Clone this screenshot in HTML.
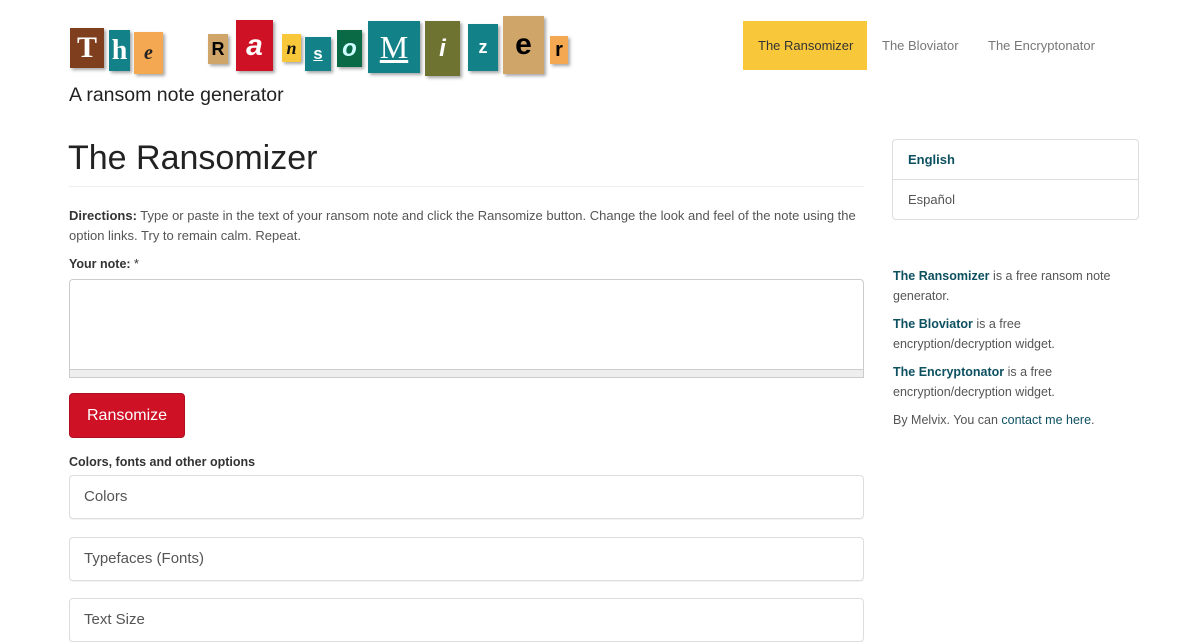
<!DOCTYPE html>
<html><head><meta charset="utf-8"><style>
*{box-sizing:border-box;margin:0;padding:0}
body{width:1200px;height:630px;overflow:hidden;background:#fff;font-family:"Liberation Sans",Arial,sans-serif;color:#333;position:relative}
.a{position:absolute}
.t{position:absolute;display:flex;align-items:center;justify-content:center;box-shadow:2px 2px 3px rgba(0,0,0,.35);font-weight:bold}
.nav{position:absolute;top:21px;height:49px;line-height:49px;font-size:13px;color:#777;white-space:nowrap}
.panel{position:absolute;left:69px;width:795px;border:1px solid #ddd;border-radius:4px;font-size:15px;color:#555;padding-left:14px;box-shadow:0 1px 1px rgba(0,0,0,.05)}
.teal{color:#0d5060;font-weight:bold}
.side p{margin-bottom:9px}
</style></head><body>
<div class="t" style="left:70px;top:28px;width:34px;height:40px;background:#7f3f1e;color:#fff;font-family:'Liberation Serif';font-size:30px">T</div>
<div class="t" style="left:109px;top:30px;width:21px;height:41px;background:#138188;color:#fff;font-family:'Liberation Serif';font-size:28px">h</div>
<div class="t" style="left:134px;top:32px;width:29px;height:42px;background:#f5a852;color:#222;font-family:'Liberation Serif';font-style:italic;font-size:20px">e</div>
<div class="t" style="left:208px;top:34px;width:20px;height:30px;background:#d0a56a;color:#000;font-size:18px">R</div>
<div class="t" style="left:236px;top:20px;width:37px;height:51px;background:#cf1125;color:#fff;font-style:italic;font-size:30px">a</div>
<div class="t" style="left:282px;top:34px;width:19px;height:28px;background:#f8c83a;color:#111;font-family:'Liberation Serif';font-style:italic;font-size:18px">n</div>
<div class="t" style="left:305px;top:37px;width:26px;height:34px;background:#138188;color:#fff;font-size:17px;text-decoration:underline">s</div>
<div class="t" style="left:337px;top:30px;width:25px;height:37px;background:#0a6a46;color:#cff;font-style:italic;font-size:24px">o</div>
<div class="t" style="left:368px;top:21px;width:52px;height:52px;background:#138188;color:#fff;font-family:'Liberation Serif';font-weight:normal;font-size:32px;text-decoration:underline">M</div>
<div class="t" style="left:425px;top:21px;width:35px;height:55px;background:#6f7331;color:#fff;font-style:italic;font-size:24px">i</div>
<div class="t" style="left:468px;top:24px;width:30px;height:47px;background:#138188;color:#fff;font-size:18px">z</div>
<div class="t" style="left:503px;top:16px;width:41px;height:58px;background:#d0a56a;color:#000;font-size:30px">e</div>
<div class="t" style="left:550px;top:36px;width:18px;height:28px;background:#f5a852;color:#000;font-size:20px">r</div>
<div class="a" style="left:69px;top:84px;font-size:19.5px;color:#222">A ransom note generator</div>

<div class="nav" style="left:743px;width:124px;background:#f8c83a;color:#333;padding-left:15px">The Ransomizer</div>
<div class="nav" style="left:882px">The Bloviator</div>
<div class="nav" style="left:988px">The Encryptonator</div>

<div class="a" style="left:68px;top:139px;font-size:34px;color:#222">The Ransomizer</div>
<div class="a" style="left:69px;top:186px;width:795px;border-top:1px solid #eee"></div>
<div class="a" style="left:69px;top:206px;width:820px;font-size:13px;line-height:20px;color:#555;white-space:nowrap"><b style="color:#333">Directions:</b> Type or paste in the text of your ransom note and click the Ransomize button. Change the look and feel of the note using the<br>option links. Try to remain calm. Repeat.</div>
<div class="a" style="left:69px;top:257px;font-size:12.5px;font-weight:bold;color:#333">Your note: <span style="font-weight:normal">*</span></div>
<div class="a" style="left:69px;top:279px;width:795px;height:91px;border:1px solid #ccc;border-radius:4px 4px 0 0"></div>
<div class="a" style="left:69px;top:369px;width:795px;height:9px;background:#eee;border:1px solid #ccc"></div>
<div class="a" style="left:69px;top:393px;width:116px;height:45px;background:#cf1125;border-radius:4px;color:#fff;font-size:16px;line-height:43px;text-align:center;border:1px solid #b00e20">Ransomize</div>
<div class="a" style="left:69px;top:455px;font-size:12.5px;font-weight:bold;color:#333">Colors, fonts and other options</div>
<div class="panel" style="top:475px;height:44px;line-height:42px">Colors</div>
<div class="panel" style="top:537px;height:44px;line-height:42px">Typefaces (Fonts)</div>
<div class="panel" style="top:598px;height:44px;line-height:42px">Text Size</div>

<div class="a" style="left:892px;top:139px;width:247px;height:81px;border:1px solid #ddd;border-radius:4px;font-size:13px">
<div style="height:40px;line-height:40px;padding-left:15px;border-bottom:1px solid #ddd;font-weight:bold;color:#0d5060">English</div>
<div style="height:39px;line-height:39px;padding-left:15px;color:#555">Español</div>
</div>
<div class="a side" style="left:893px;top:267px;width:240px;font-size:12.5px;line-height:19.5px;color:#555">
<p><span class="teal">The Ransomizer</span> is a free ransom note generator.</p>
<p><span class="teal">The Bloviator</span> is a free<br>encryption/decryption widget.</p>
<p><span class="teal">The Encryptonator</span> is a free<br>encryption/decryption widget.</p>
<p>By Melvix. You can <span style="color:#0d5060">contact me here</span>.</p>
</div>
</body></html>
